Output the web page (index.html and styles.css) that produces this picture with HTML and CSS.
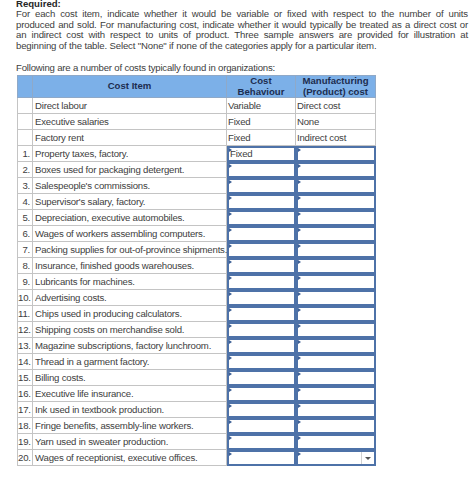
FILE: index.html
```html
<!DOCTYPE html>
<html>
<head>
<meta charset="utf-8">
<link rel="stylesheet" href="styles.css">
</head>
<body>
<div class="page">
  <div class="intro">
    <strong class="req">Required:</strong>
    <span class="ln">For each cost item, indicate whether it would be variable or fixed with respect to the number of units</span>
    <span class="ln">produced and sold. For manufacturing cost, indicate whether it would typically be treated as a direct cost or</span>
    <span class="ln">an indirect cost with respect to units of product. Three sample answers are provided for illustration at</span>
    <span class="ln last">beginning of the table. Select "None" if none of the categories apply for a particular item.</span>
  </div>
  <p class="lead">Following are a number of costs typically found in organizations:</p>
  <table class="grid">
    <colgroup><col class="c-num"><col class="c-item"><col class="c-beh"><col class="c-man"></colgroup>
    <thead>
      <tr><th></th><th>Cost Item</th><th>Cost<br>Behaviour</th><th>Manufacturing<br>(Product) cost</th></tr>
    </thead>
    <tbody>
      <tr><td class="num"></td><td class="item">Direct labour</td><td class="val">Variable</td><td class="val">Direct cost</td></tr>
      <tr><td class="num"></td><td class="item">Executive salaries</td><td class="val">Fixed</td><td class="val">None</td></tr>
      <tr><td class="num"></td><td class="item">Factory rent</td><td class="val">Fixed</td><td class="val">Indirect cost</td></tr>
      <tr><td class="num">1.</td><td class="item">Property taxes, factory.</td><td class="in"><div class="box">Fixed</div></td><td class="in"><div class="box"></div></td></tr>
      <tr><td class="num">2.</td><td class="item">Boxes used for packaging detergent.</td><td class="in"><div class="box"></div></td><td class="in"><div class="box"></div></td></tr>
      <tr><td class="num">3.</td><td class="item">Salespeople's commissions.</td><td class="in"><div class="box"></div></td><td class="in"><div class="box"></div></td></tr>
      <tr><td class="num">4.</td><td class="item">Supervisor's salary, factory.</td><td class="in"><div class="box"></div></td><td class="in"><div class="box"></div></td></tr>
      <tr><td class="num">5.</td><td class="item">Depreciation, executive automobiles.</td><td class="in"><div class="box"></div></td><td class="in"><div class="box"></div></td></tr>
      <tr><td class="num">6.</td><td class="item">Wages of workers assembling computers.</td><td class="in"><div class="box"></div></td><td class="in"><div class="box"></div></td></tr>
      <tr><td class="num">7.</td><td class="item">Packing supplies for out-of-province shipments.</td><td class="in"><div class="box"></div></td><td class="in"><div class="box"></div></td></tr>
      <tr><td class="num">8.</td><td class="item">Insurance, finished goods warehouses.</td><td class="in"><div class="box"></div></td><td class="in"><div class="box"></div></td></tr>
      <tr><td class="num">9.</td><td class="item">Lubricants for machines.</td><td class="in"><div class="box"></div></td><td class="in"><div class="box"></div></td></tr>
      <tr><td class="num">10.</td><td class="item">Advertising costs.</td><td class="in"><div class="box"></div></td><td class="in"><div class="box"></div></td></tr>
      <tr><td class="num">11.</td><td class="item">Chips used in producing calculators.</td><td class="in"><div class="box"></div></td><td class="in"><div class="box"></div></td></tr>
      <tr><td class="num">12.</td><td class="item">Shipping costs on merchandise sold.</td><td class="in"><div class="box"></div></td><td class="in"><div class="box"></div></td></tr>
      <tr><td class="num">13.</td><td class="item">Magazine subscriptions, factory lunchroom.</td><td class="in"><div class="box"></div></td><td class="in"><div class="box"></div></td></tr>
      <tr><td class="num">14.</td><td class="item">Thread in a garment factory.</td><td class="in"><div class="box"></div></td><td class="in"><div class="box"></div></td></tr>
      <tr><td class="num">15.</td><td class="item">Billing costs.</td><td class="in"><div class="box"></div></td><td class="in"><div class="box"></div></td></tr>
      <tr><td class="num">16.</td><td class="item">Executive life insurance.</td><td class="in"><div class="box"></div></td><td class="in"><div class="box"></div></td></tr>
      <tr><td class="num">17.</td><td class="item">Ink used in textbook production.</td><td class="in"><div class="box"></div></td><td class="in"><div class="box"></div></td></tr>
      <tr><td class="num">18.</td><td class="item">Fringe benefits, assembly-line workers.</td><td class="in"><div class="box"></div></td><td class="in"><div class="box"></div></td></tr>
      <tr><td class="num">19.</td><td class="item">Yarn used in sweater production.</td><td class="in"><div class="box"></div></td><td class="in"><div class="box"></div></td></tr>
      <tr><td class="num">20.</td><td class="item">Wages of receptionist, executive offices.</td><td class="in"><div class="box"></div></td><td class="in"><div class="box select"><span class="drop"></span></div></td></tr>
    </tbody>
  </table>
</div>
</body>
</html>
```

FILE: styles.css
```css
html, body {
  margin: 0;
  padding: 0;
  background: #ffffff;
}

.page {
  padding: 0 6px 0 16px;
  font-family: "Liberation Sans", Arial, sans-serif;
  font-size: 9.6px;
  letter-spacing: -0.2px;
  color: #404040;
}

.intro {
  margin: -1px 0 0 0;
  font-size: 9.6px;
  letter-spacing: -0.15px;
  line-height: 10.4px;
}

.intro .req {
  display: block;
  color: #262626;
  letter-spacing: 0;
}

.intro .ln {
  display: block;
  white-space: nowrap;
  text-align: justify;
  text-align-last: justify;
}

.intro .ln.last {
  text-align-last: left;
}

.lead {
  margin: 12px 0 2px 0;
  line-height: 10px;
}

.grid {
  border-collapse: collapse;
  margin-left: 1px;
  table-layout: fixed;
  width: 358px;
}

.c-num { width: 15px; }
.c-item { width: 194px; }
.c-beh { width: 69px; }
.c-man { width: 80px; }

.grid th {
  background: #7cb0e8;
  color: #1c2d4f;
  font-weight: bold;
  font-size: 9.6px;
  letter-spacing: 0;
  line-height: 10.5px;
  height: 21px;
  padding: 0;
  border: 1px solid #8fa9c8;
  text-align: center;
}

.grid td {
  height: 15px;
  padding: 0;
  border: 1px solid #c4c4c4;
  line-height: 15px;
  white-space: nowrap;
  overflow: visible;
}

.grid td.num {
  text-align: right;
  padding-right: 2px;
}

.grid td.item {
  padding-left: 2px;
}

.grid td.val {
  padding-left: 1px;
}

.grid td.in {
  padding: 0;
  border: none;
}

.box {
  position: relative;
  box-sizing: border-box;
  height: 16px;
  border: 2px solid #4e72a8;
  margin-bottom: -1px;
  line-height: 12px;
  padding-left: 1px;
  background: #fff;
}

.box::before {
  content: "";
  position: absolute;
  left: 0;
  top: 0;
  border-top: 2px solid transparent;
  border-bottom: 2px solid transparent;
  border-left: 3px solid #3d5f95;
}

.box.select .drop {
  position: absolute;
  right: 0;
  top: 0;
  bottom: 0;
  width: 12px;
  border-left: 1px solid #d0d0d0;
}

.box.select .drop::after {
  content: "";
  position: absolute;
  left: 3px;
  top: 5px;
  border-left: 3px solid transparent;
  border-right: 3px solid transparent;
  border-top: 3px solid #555;
}
```
